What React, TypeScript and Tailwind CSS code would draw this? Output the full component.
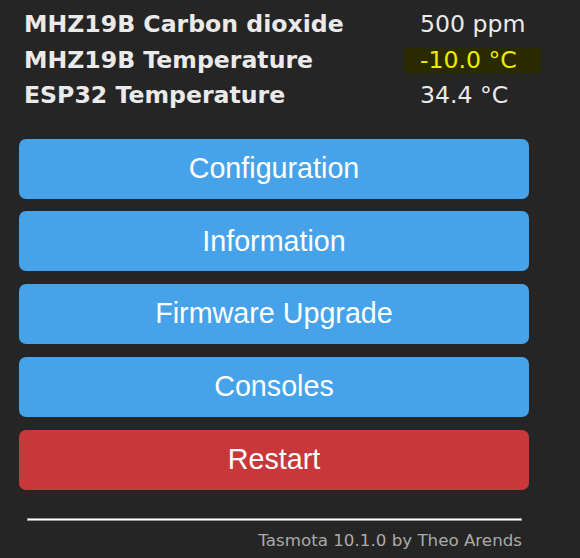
import React from "react";

const rows: { label: string; value: string; hl?: boolean }[] = [
  { label: "MHZ19B Carbon dioxide", value: "500 ppm" },
  { label: "MHZ19B Temperature", value: "-10.0 °C", hl: true },
  { label: "ESP32 Temperature", value: "34.4 °C" },
];

const buttons = ["Configuration", "Information", "Firmware Upgrade", "Consoles"];

export default function App() {
  return (
    <div className="w-[580px] h-[558px] bg-[#252525] overflow-hidden">
      <div className="pt-[7.5px] pl-[24px] font-['DejaVu_Sans','Verdana',sans-serif] text-[23.6px] text-[#eaeaea]">
        {rows.map((r) => (
          <div key={r.label} className="flex h-[35.5px] items-center">
            <div className="w-[380px] font-bold leading-none">{r.label}</div>
            <div
              className={
                r.hl
                  ? "w-[137px] h-[25px] flex items-center pl-[16px] pt-[1px] bg-[#2a2a00] text-[#ecec00] leading-none"
                  : "w-[137px] pl-[16px] leading-none"
              }
            >
              {r.value}
            </div>
          </div>
        ))}
      </div>
      <div className="mt-[24.5px] ml-[19px] w-[510px] flex flex-col gap-[12.75px] font-['Liberation_Sans','Arial',sans-serif]">
        {buttons.map((b) => (
          <div
            key={b}
            className="h-[60px] rounded-[7px] bg-[#47a3e9] text-white text-[28.7px] flex items-center justify-center"
          >
            {b}
          </div>
        ))}
        <div className="h-[60px] rounded-[7px] bg-[#c8373a] text-white text-[28.7px] flex items-center justify-center">
          Restart
        </div>
      </div>
      <div className="ml-[27px] w-[495px] mt-[28px] h-[3px] bg-white border border-[#999]" />
      <div className="ml-[27px] w-[495px] text-right mt-[11px] text-[16.7px] leading-none text-[#aaaaaa] font-['DejaVu_Sans','Verdana',sans-serif]">
        Tasmota 10.1.0 by Theo Arends
      </div>
    </div>
  );
}
